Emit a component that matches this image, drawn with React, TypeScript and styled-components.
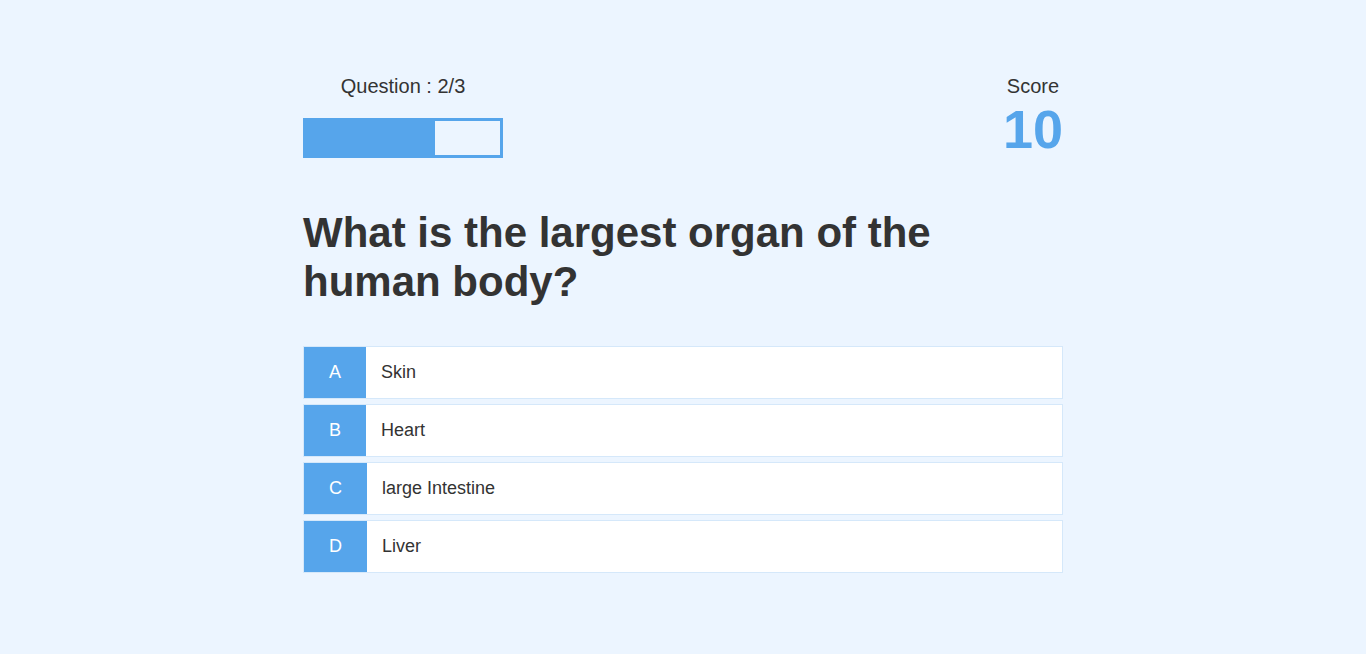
import React from 'react'
import styled, { createGlobalStyle } from 'styled-components'

const GlobalStyle = createGlobalStyle`
  * {
    box-sizing: border-box;
    margin: 0;
    padding: 0;
  }
  body {
    background-color: #ecf5ff;
    color: #333;
    font-family: "Liberation Sans", Arial, sans-serif;
  }
`

const Container = styled.div`
  width: 100%;
  max-width: 800px;
  margin: 0 auto;
  padding: 75px 20px 20px;
`

const Hud = styled.div`
  display: flex;
  justify-content: space-between;
`

const HudItem = styled.div`
  display: flex;
  flex-direction: column;
  align-items: center;
`

const HudPrefix = styled.p`
  font-size: 20px;
  text-align: center;
`

const HudMain = styled.h1`
  font-size: 54px;
  font-weight: 700;
  color: #56a5eb;
  text-align: center;
`

const ProgressBar = styled.div`
  width: 200px;
  height: 40px;
  border: 3px solid #56a5eb;
  margin-top: 20px;
`

const ProgressFill = styled.div`
  height: 100%;
  background-color: #56a5eb;
`

const Question = styled.h2`
  font-size: 42px;
  line-height: 48.5px;
  font-weight: 700;
  margin-top: 49px;
  margin-bottom: 40px;
`

const Choice = styled.div`
  display: flex;
  width: 100%;
  margin-bottom: 5px;
  font-size: 18px;
  border: 1px solid rgba(86, 165, 235, 0.25);
  background-color: #fff;
  cursor: pointer;

  &:hover {
    box-shadow: 0 4px 14px rgba(86, 165, 235, 0.5);
    transform: translateY(-1px);
  }
`

const ChoicePrefix = styled.p`
  padding: 15px 25px;
  background-color: #56a5eb;
  color: #fff;
`

const ChoiceText = styled.p`
  padding: 15px;
  width: 100%;
`

const choices = [
  { prefix: 'A', text: 'Skin' },
  { prefix: 'B', text: 'Heart' },
  { prefix: 'C', text: 'large Intestine' },
  { prefix: 'D', text: 'Liver' }
]

const questionCounter = 2
const maxQuestions = 3

const App = () => {
  return (
    <>
      <GlobalStyle />
      <Container>
        <Hud>
          <HudItem>
            <HudPrefix>
              Question : {questionCounter}/{maxQuestions}
            </HudPrefix>
            <ProgressBar>
              <ProgressFill
                style={{ width: `${(questionCounter / maxQuestions) * 100}%` }}
              />
            </ProgressBar>
          </HudItem>
          <HudItem>
            <HudPrefix>Score</HudPrefix>
            <HudMain>10</HudMain>
          </HudItem>
        </Hud>
        <Question>What is the largest organ of the human body?</Question>
        {choices.map((c) => (
          <Choice key={c.prefix}>
            <ChoicePrefix>{c.prefix}</ChoicePrefix>
            <ChoiceText>{c.text}</ChoiceText>
          </Choice>
        ))}
      </Container>
    </>
  )
}

export default App
